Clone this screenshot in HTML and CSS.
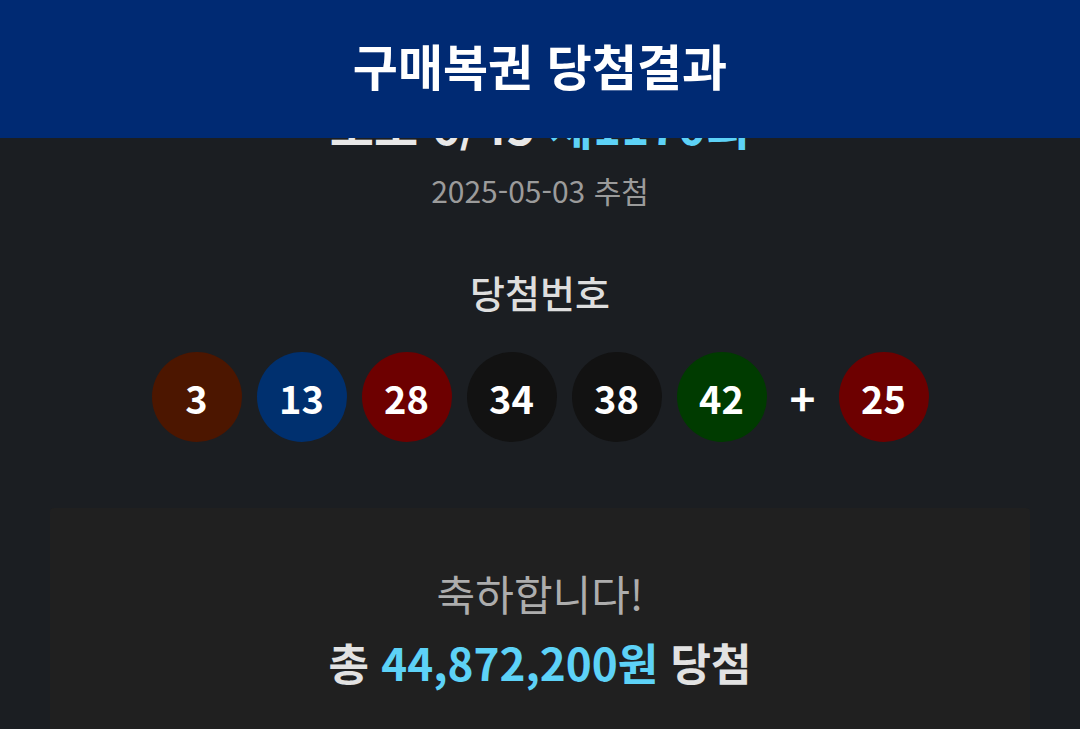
FILE: index.html
```html
<!DOCTYPE html>
<html lang="ko">
<head>
    <meta charset="utf-8" />
    <title>구매복권 당첨결과</title>
    <meta content="width=device-width, initial-scale=1" name="viewport" />
    <link rel="stylesheet" href="styles.css">
</head>
<body>
    <header class="top-bar">
        <h1 class="top-bar-title">구매복권 당첨결과</h1>
    </header>

    <main class="result">
        <h2 class="result-title">로또 6/45 <span class="accent">제1170회</span></h2>
        <p class="result-date">2025-05-03 추첨</p>

        <h3 class="result-label">당첨번호</h3>
        <div class="balls">
            <span class="ball ball-brown">3</span>
            <span class="ball ball-blue">13</span>
            <span class="ball ball-red">28</span>
            <span class="ball ball-black">34</span>
            <span class="ball ball-black">38</span>
            <span class="ball ball-green">42</span>
            <span class="ball-plus">+</span>
            <span class="ball ball-red">25</span>
        </div>

        <section class="prize-card">
            <p class="prize-hello">축하합니다!</p>
            <p class="prize-total">총 <span class="accent">44,872,200원</span> 당첨</p>
        </section>
    </main>
</body>
</html>
```

FILE: styles.css
```css
html, body {
    margin: 0;
    padding: 0;
}
body {
    background: #1b1e22;
    color: #e6e6e6;
    font-family: "Noto Sans CJK KR", "Noto Sans", sans-serif;
}
p, h1, h2, h3 {
    margin: 0;
}
.accent {
    color: #5dd2f7;
}

/* 상단 고정 바 (스크롤 시 내용 위에 겹침) */
.top-bar {
    position: fixed;
    top: 0;
    left: 0;
    right: 0;
    z-index: 10;
    height: 138px;
    background: #002a73;
    display: flex;
    align-items: center;
    justify-content: center;
}
.top-bar-title {
    color: #fff;
    font-size: 49px;
    font-weight: 700;
    line-height: 60px;
    margin-top: -8px;
}

/* 회차 정보 */
.result {
    display: flex;
    flex-direction: column;
    align-items: center;
    padding-top: 92px;
}
.result-title {
    font-size: 48px;
    font-weight: 700;
    line-height: 64px;
    color: #e8e8e8;
}
.result-date {
    margin-top: 12px;
    font-size: 30px;
    line-height: 44px;
    color: #9b9b9b;
}
.result-label {
    margin-top: 56px;
    font-size: 38px;
    font-weight: 500;
    line-height: 48px;
    color: #dedede;
}

/* 당첨번호 공 */
.balls {
    margin-top: 36px;
    display: flex;
    align-items: center;
    gap: 15px;
}
.ball {
    width: 90px;
    height: 90px;
    border-radius: 50%;
    display: flex;
    align-items: center;
    justify-content: center;
    color: #fff;
    font-size: 38px;
    font-weight: 700;
}
.ball-brown { background: #4c1600; }
.ball-blue { background: #00306f; }
.ball-red { background: #6d0000; }
.ball-black { background: #121212; }
.ball-green { background: #003b00; }
.ball-plus {
    width: 42px;
    text-align: center;
    color: #fff;
    font-size: 44px;
    font-weight: 700;
    line-height: 44px;
}

/* 당첨금 카드 */
.prize-card {
    box-sizing: border-box;
    width: 980px;
    margin-top: 66px;
    padding: 58px 0 60px;
    background: #202020;
    border-radius: 4px;
    text-align: center;
}
.prize-hello {
    font-size: 42px;
    line-height: 54px;
    color: #adadad;
}
.prize-total {
    margin-top: 12px;
    font-size: 44px;
    font-weight: 700;
    line-height: 60px;
    color: #e2e2e2;
}
```
